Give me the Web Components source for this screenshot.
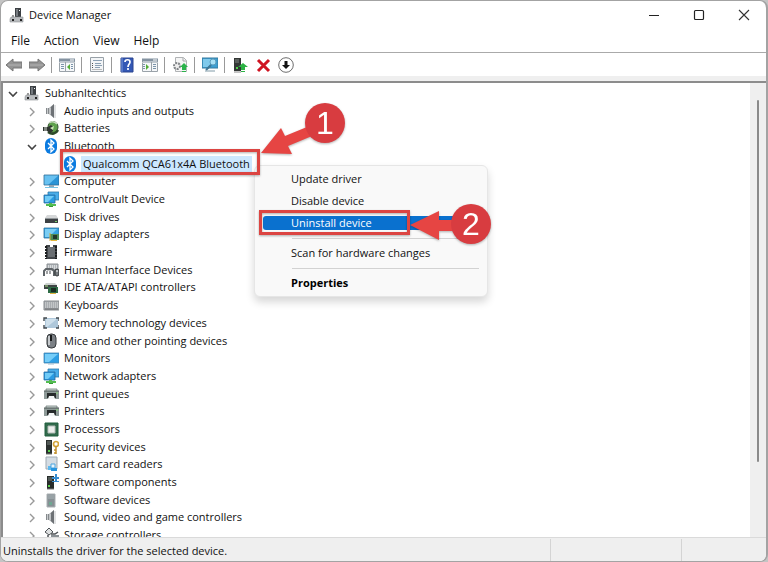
<!DOCTYPE html>
<html lang="en">
<head>
<meta charset="utf-8">
<title>Device Manager</title>
<style>
    body {
        margin: 0;
        background: #c4c4c4;
        font: 11px/16px "Open Sans", "Noto Sans", sans-serif;
        color: #111;
    }
</style>
</head>
<body>
<dm-window>
    <dm-titlebar slot="title">Device Manager</dm-titlebar>
    <dm-menubar slot="menubar"></dm-menubar>
    <dm-toolbar slot="toolbar"></dm-toolbar>
    <dm-tree>
        <dm-node level="0" icon="computer-root" open>Subhanltechtics</dm-node>
        <dm-node level="1" icon="speaker">Audio inputs and outputs</dm-node>
        <dm-node level="1" icon="battery">Batteries</dm-node>
        <dm-node level="1" icon="bluetooth" open>Bluetooth</dm-node>
        <dm-node level="2" icon="bluetooth" leaf selected>Qualcomm QCA61x4A Bluetooth</dm-node>
        <dm-node level="1" icon="computer">Computer</dm-node>
        <dm-node level="1" icon="network">ControlVault Device</dm-node>
        <dm-node level="1" icon="disk">Disk drives</dm-node>
        <dm-node level="1" icon="display">Display adapters</dm-node>
        <dm-node level="1" icon="firmware">Firmware</dm-node>
        <dm-node level="1" icon="hid">Human Interface Devices</dm-node>
        <dm-node level="1" icon="ide">IDE ATA/ATAPI controllers</dm-node>
        <dm-node level="1" icon="keyboard">Keyboards</dm-node>
        <dm-node level="1" icon="memory">Memory technology devices</dm-node>
        <dm-node level="1" icon="mouse">Mice and other pointing devices</dm-node>
        <dm-node level="1" icon="monitor">Monitors</dm-node>
        <dm-node level="1" icon="network">Network adapters</dm-node>
        <dm-node level="1" icon="printer">Print queues</dm-node>
        <dm-node level="1" icon="printer">Printers</dm-node>
        <dm-node level="1" icon="cpu">Processors</dm-node>
        <dm-node level="1" icon="security">Security devices</dm-node>
        <dm-node level="1" icon="smartcard">Smart card readers</dm-node>
        <dm-node level="1" icon="component">Software components</dm-node>
        <dm-node level="1" icon="softdev">Software devices</dm-node>
        <dm-node level="1" icon="speaker">Sound, video and game controllers</dm-node>
        <dm-node level="1" icon="storage">Storage controllers</dm-node>
    </dm-tree>
    <dm-context-menu slot="overlay">
        <dm-menu-item>Update driver</dm-menu-item>
        <dm-menu-item>Disable device</dm-menu-item>
        <dm-menu-item active>Uninstall device</dm-menu-item>
        <dm-menu-separator></dm-menu-separator>
        <dm-menu-item>Scan for hardware changes</dm-menu-item>
        <dm-menu-separator></dm-menu-separator>
        <dm-menu-item bold>Properties</dm-menu-item>
    </dm-context-menu>
    <dm-callouts slot="overlay"></dm-callouts>
    <dm-statusbar slot="status">Uninstalls the driver for the selected device.</dm-statusbar>
</dm-window>

<script>
const ICONS = {
    'computer-root': `<path d="M6 1h6v9H6z" fill="#3c4044"/><path d="M7 2h2v7H7z" fill="#74797e"/><path d="M10 3h1v1h-1z" fill="#fff"/>
        <path d="M3 8h2v2H3z" fill="#999"/><path d="M2 10h12v5H1v-3z" fill="#b8bbbe" stroke="#8d9093" stroke-width=".6"/><path d="M3 12h2v2H3zM11 12h2v2h-2z" fill="#222"/>`,
    speaker: `<path d="M3 5h4v6H3z" fill="#85898c"/><path d="M4 5h1v6H4z" fill="#c9ccce"/><path d="M6 5l5-4v14l-5-4z" fill="#a5a9ac"/><path d="M8 4l3-3v14l-3-3z" fill="#6d7175"/>
        <path d="M7 5v6" stroke="#dcdee0"/><path d="M12 2v13" stroke="#c3c6c8"/>`,
    battery: `<ellipse cx="10" cy="7" rx="5" ry="5.500" fill="#5fa24c" stroke="#35522f"/><path d="M6 3c3-2 6-1 8 1" fill="none" stroke="#c6dcbc" stroke-width="1.5"/><path d="M5 12c4 3 8 2 10-2" fill="none" stroke="#2d4a29" stroke-width="2.500"/>
        <path d="M0 7h5l3-2 2 2v4l-3 2-3-2H0z" fill="#2f3530"/><path d="M1 8h3M1 10h3" stroke="#d4dad2"/><path d="M7 8l4-2-1 4z" fill="#cde9b6"/>`,
    bluetooth: `<rect x="2" y="0" width="12" height="16" rx="6" fill="#0b7be0"/><path d="M5 5l6 6-3 3V2l3 3-6 6" fill="none" stroke="#fff" stroke-width="1.3"/>`,
    computer: `<path d="M1 2h15v10H1z" fill="#2b94d6"/><path d="M1 2h15L5 12H1z" fill="#67c1f1"/><path d="M1 2h15v10H1z" fill="none" stroke="#2e6d98" stroke-width=".8"/><path d="M6 12h5v2H6z" fill="#93a5b0"/><path d="M2 14h13v1H2z" fill="#78c4e6"/>`,
    network: `<path d="M5 1h11v8H5z" fill="#49ade9" stroke="#2f78aa" stroke-width=".8"/><path d="M1 4h11v8H1z" fill="#2a9be2" stroke="#2669a0" stroke-width=".8"/><path d="M2 5h9l-6 6H2z" fill="#70cbf7"/><path d="M6 12h3v1h4v2H3v-2h3z" fill="#53bd50"/><path d="M6 15h4v1H6z" fill="#369936"/>`,
    disk: `<path d="M4 6h9l2 3H2z" fill="#d5d7d8"/><path d="M2 9h13v5H2z" fill="#3d4144"/><path d="M2 9h13v1H2z" fill="#92979a"/><path d="M12 12h2v1h-2z" fill="#77d06d"/>`,
    display: `<path d="M1 2h15v10H1z" fill="#36a3e2" stroke="#2d7099" stroke-width=".8"/><path d="M2 3h12l-8 8H2z" fill="#7bcef4"/><path d="M7 8h9v6H7z" fill="#4e8a55"/><path d="M10 9h4v4h-4z" fill="#22372b"/><path d="M8 14h6v1H8z" fill="#e3b53b"/><path d="M7 7v8" stroke="#d7ab3f"/>`,
    firmware: `<path d="M3 1h11v14H3z" fill="#42464a"/><path d="M5 3h7v10H5z" fill="#6a6e72"/><path d="M3 2v13M13 2v13" stroke="#1b1d1e" stroke-width="2" stroke-dasharray="2 1"/><path d="M7 1h3v2H7z" fill="#fff"/>`,
    hid: `<path d="M4 2h11v6H4z" fill="#b0b5b9" stroke="#8a8f93"/><path d="M5 4h9M5 6h9" stroke="#fff" stroke-dasharray="1 1"/><path d="M1 14V9l2-2h6l2 2v5" fill="none" stroke="#5f6468" stroke-width="2"/><path d="M4 9v3M7 9v3" stroke="#44494c"/><rect x="12" y="7" width="4" height="7" rx="2" fill="#777c80" stroke="#303437"/><path d="M14 8v2" stroke="#fff"/>`,
    ide: `<path d="M3 4h9l2 2H1z" fill="#cdd2d0"/><path d="M1 6h13v4H1z" fill="#3f4545"/><path d="M5 8h10v6H5z" fill="#2e6b45"/><path d="M8 9h5v4H8z" fill="#192c21"/><path d="M7 14h6v1H7z" fill="#dfb440"/><path d="M2 7h3" stroke="#aee08c"/>`,
    keyboard: `<path d="M1 4h15v9H1z" fill="#a9adb0" stroke="#888c8f"/><path d="M2 6h13M2 8h13M2 10h13" stroke="#dcdedf" stroke-dasharray="1 1"/><path d="M2 12h13" stroke="#66696c"/>`,
    memory: `<path d="M2 3h13v10H2z" fill="#aec7da"/><path d="M3 4h11L4 12H3z" fill="#cedfeb"/><path d="M1 6V3h3M13 3h3v3M16 10v3h-3M4 13H1v-3" fill="none" stroke="#42494f" stroke-width="1.4"/>`,
    mouse: `<rect x="4" y="1" width="9" height="14" rx="4" fill="#7b8085" stroke="#34383b"/><path d="M6 3v9" stroke="#c5c9cc" stroke-width="2"/><path d="M8 2v6" stroke="#181a1b" stroke-width="2"/>`,
    monitor: `<path d="M1 3h15v10H1z" fill="#2d9fe5"/><path d="M2 4h13L6 12H2z" fill="#75cdf8"/><path d="M1 3h15v10H1z" fill="none" stroke="#4a86ad" stroke-width=".8"/><path d="M5 14h6" stroke="#a3bed0"/>`,
    printer: `<path d="M3 3h11v3H3z" fill="#d0dad7" stroke="#6f7c79" stroke-width=".8"/><path d="M1 5h15v8H1z" fill="#8d9997"/><path d="M1 5h15" stroke="#4c5755"/><path d="M4 7h9v5H4z" fill="#262b2b"/><path d="M6 10h5l1 3H5z" fill="#f3f6f6"/><path d="M13 7h2" stroke="#87da74"/>`,
    cpu: `<path d="M2 2h13v13H2z" fill="#336b4d"/><path d="M2 2h13v13H2z" fill="none" stroke="#1f5e3c"/><path d="M5 5h7v7H5z" fill="#eceeec" stroke="#b4bcb7"/>`,
    security: `<path d="M3 1h6v14H3z" fill="#2b302e"/><path d="M4 3h4M4 5h4" stroke="#79807c"/><path d="M5 11h2v2H5z" fill="#58d14b"/><path d="M3 15h6" stroke="#737875"/><circle cx="13" cy="5" r="2.500" fill="none" stroke="#d4a43a" stroke-width="1.7"/><path d="M13 7v8M13 11h-2M13 14h-2" stroke="#c1902c" stroke-width="1.5"/>`,
    smartcard: `<path d="M3 1h11v12H3z" fill="#d4dce3" stroke="#9faab3"/><path d="M5 10h4v4H5z" fill="#5bb7ed"/><path d="M8 8h4v4H8z" fill="#e9f5fd" stroke="#4da5df"/><path d="M8 12h6v3H8z" fill="#2795df"/>`,
    component: `<path d="M4 2h7v13H4z" fill="#272c2a"/><path d="M5 4h4M5 6h4" stroke="#7d8480"/><path d="M5 11h2v2H5z" fill="#5cd14d"/><path d="M4 15h7" stroke="#777"/><path d="M9 3h3V0h2v3h2v2h-2v2h2v1H9V7h3V5H9z" fill="#388dd0"/>`,
    softdev: `<path d="M4 2h8v13H4z" fill="#879094" stroke="#aab0b3"/><path d="M5 4h6M5 6h6" stroke="#a9b4b8"/><path d="M6 10h3v3H6z" fill="#6fa792"/>`,
    storage: `<path d="M2 5l4-4 4 4-4 3z" fill="#dfe1e2" stroke="#4d5255"/><path d="M5 8v3M8 7h4l3-2" fill="none" stroke="#4d5255" stroke-width="1.5"/><path d="M8 8h8v7H8z" fill="#8b9195"/>`,
    back: `<path d="M0 8l7-6v3h9v6H7v3z" fill="#949494" stroke="#777"/><path d="M2 8h13" stroke="#b3b3b3"/>`,
    forward: `<path d="M16 8L9 2v3H0v6h9v3z" fill="#949494" stroke="#777"/><path d="M1 8h13" stroke="#b3b3b3"/>`,
    'tree-pane': `<path d="M0 2h16v12H0z" fill="#f5f7f9"/><path d="M.5 2v12.500h15V2" fill="none" stroke="#9aa2a9"/><path d="M0 3h16" stroke="#8493a1" stroke-width="3"/><path d="M11 3h4" stroke="#fff"/><path d="M0 5.500h16" stroke="#c3cad0"/><path d="M2 7.500h3M2 9.500h3M2 11.500h3M12 7.500h2M12 9.500h2M12 11.500h2" stroke="#7b94aa"/><path d="M6.500 5v9" stroke="#9aa2a9"/><path d="M11 7v6L8 10z" fill="#54ad37"/>`,
    properties: `<path d="M1.500.5h13v14h-13z" fill="#f3f5f7" stroke="#98a0a7"/><path d="M4 3.500h9M6 6.500h6M6 8.500h7M6 10.500h5" stroke="#8ba0b3"/><path d="M3 6.500h1M3 8.500h1M3 10.500h1" stroke="#555"/><path d="M3 12.500h10" stroke="#bbb"/>`,
    help: `<path d="M2 1h12v14H2z" fill="#3458b5" stroke="#2a448f"/><path d="M3 1v14" stroke="#7897df"/><path d="M6 5c0-3 5-3 5 0 0 2-2 2-2 5M9 11v2" fill="none" stroke="#fff" stroke-width="1.7"/>`,
    'action-pane': `<path d="M0 2h16v12H0z" fill="#f5f7f9"/><path d="M.5 2v12.500h15V2" fill="none" stroke="#9aa2a9"/><path d="M0 3h16" stroke="#8493a1" stroke-width="3"/><path d="M11 3h4" stroke="#fff"/><path d="M0 5.500h16" stroke="#c3cad0"/><path d="M1 7.500h2M1 9.500h2M1 11.500h2M11 7.500h3M11 9.500h3M11 11.500h3" stroke="#7b94aa"/><path d="M9.500 5v9" stroke="#9aa2a9"/><path d="M4 7v6l3-3z" fill="#54ad37"/>`,
    update: `<path d="M3.500.5h8l3 3v11h-11z" fill="#f5f5f5" stroke="#b0b3b5"/><path d="M11 1v3h3" fill="none" stroke="#a5a8aa"/><circle cx="5" cy="9" r="3" fill="#eee" stroke="#808487" stroke-width="2" stroke-dasharray="2 1"/><path d="M12 6l4 4h-2v3h-4v-3H8z" fill="#2bb34b"/><path d="M10 14.500h4" stroke="#2bb34b"/>`,
    scan: `<path d="M0 1h16v10H0z" fill="#3d9ed1" stroke="#367b9f"/><path d="M1 2h12l-7 8H1z" fill="#80caec"/><circle cx="11" cy="5" r="3" fill="#a9e0f5" stroke="#5b9dbd"/><path d="M9 8l-5 5" stroke="#3e7897" stroke-width="2"/><path d="M3 14h10" stroke="#819ba8"/>`,
    enable: `<path d="M2 1h7v13H2z" fill="#333735"/><path d="M3 3h4M3 5h4" stroke="#838986"/><path d="M4 10h2v2H4z" fill="#54d14d"/><path d="M2 15h7" stroke="#888"/><path d="M11 6l5 4h-3v3H9v-3H6z" fill="#2cb244"/><path d="M9 14.500h4" stroke="#2cb244"/>`,
    remove: `<path d="M3 3l11 11M14 3L3 14" stroke="#cf1321" stroke-width="3"/>`,
    down: `<circle cx="8" cy="8" r="7.300" fill="#fff" stroke="#5c5c5c" stroke-width=".9"/><path d="M8 4v5" stroke="#111" stroke-width="3"/><path d="M4 8h8l-4 4z" fill="#111"/>`,
    minimize: `<path d="M3 8.500h10" stroke="#222"/>`,
    maximize: `<rect x="3.500" y="3.500" width="9" height="9" rx="1" fill="none" stroke="#222" stroke-width="1.2"/>`,
    close: `<path d="M3 3l10 10M13 3L3 13" stroke="#333" stroke-width="1.1"/>`,
    'chevron-right': `<path d="M6 5l4 4-4 4" fill="none" stroke="#999" stroke-width="1.4"/>`,
    'chevron-down': `<path d="M4 7l4 4 4-4" fill="none" stroke="#444" stroke-width="1.6"/>`
};

const svg = name => `<svg width="16" height="16" viewBox="0 0 16 16" aria-hidden="true">${ICONS[name] || ''}</svg>`;

class DmWindow extends HTMLElement {
    constructor() {
        super();
        this.attachShadow({ mode: 'open' });
        this.shadowRoot.innerHTML = `
        <style>
            :host {
                display: flex;
                flex-direction: column;
                position: relative;
                box-sizing: border-box;
                height: 100vh;
                border: 1px solid #a3a3a3;
                border-right-width: 2px;
                border-radius: 8px;
                background: #fff;
                overflow: hidden;
            }
            main { display: flex; flex: 1; min-height: 0; }
            ::slotted(dm-tree) { flex: 1; }
        </style>
        <slot name="title"></slot>
        <slot name="menubar"></slot>
        <slot name="toolbar"></slot>
        <main><slot></slot></main>
        <slot name="status"></slot>
        <slot name="overlay"></slot>
        `;
    }
}
customElements.define('dm-window', DmWindow);

class DmTitlebar extends HTMLElement {
    constructor() {
        super();
        this.attachShadow({ mode: 'open' });
        this.shadowRoot.innerHTML = `
        <style>
            :host { display: flex; align-items: center; height: 28px; padding-left: 8px; }
            svg { display: block; }
            h1 { flex: 1; margin: 0 0 0 4px; font-size: 11px; font-weight: 400; }
            button { width: 45px; height: 28px; padding: 0; border: 0; background: none; display: grid; place-items: center; }
        </style>
        ${svg('computer-root')}
        <h1><slot></slot></h1>
        <button aria-label="Minimize">${svg('minimize')}</button>
        <button aria-label="Maximize">${svg('maximize')}</button>
        <button aria-label="Close">${svg('close')}</button>
        `;
    }
}
customElements.define('dm-titlebar', DmTitlebar);

class DmMenubar extends HTMLElement {
    constructor() {
        super();
        this.attachShadow({ mode: 'open' });
        this.shadowRoot.innerHTML = `
        <style>
            :host { display: block; border-bottom: 1px solid #aaa; }
            nav { display: flex; gap: 14px; height: 23px; padding-left: 10px; align-items: center; }
            button { padding: 0; border: 0; background: none; font: inherit; font-size: 12px; color: inherit; }
        </style>
        <nav>
            <button>File</button>
            <button>Action</button>
            <button>View</button>
            <button>Help</button>
        </nav>
        `;
    }
}
customElements.define('dm-menubar', DmMenubar);

class DmToolbar extends HTMLElement {
    constructor() {
        super();
        this.attachShadow({ mode: 'open' });
        const groups = [
            [['back', 'Back'], ['forward', 'Forward']],
            [['tree-pane', 'Show/Hide Console Tree']],
            [['properties', 'Properties']],
            [['help', 'Help'], ['action-pane', 'Show/Hide Action Pane']],
            [['update', 'Update device driver']],
            [['scan', 'Scan for hardware changes']],
            [['enable', 'Enable device'], ['remove', 'Uninstall device'], ['down', 'Disable device']]
        ];
        this.shadowRoot.innerHTML = `
        <style>
            :host { display: flex; align-items: center; height: 23px; padding-left: 5px; border-bottom: 5px solid #efefef; }
            div { display: flex; gap: 7px; padding-right: 6px; }
            div + div { padding-left: 7px; border-left: 1px solid #999; }
            button { display: block; width: 16px; height: 16px; padding: 0; border: 0; background: none; }
            svg { display: block; }
        </style>
        ${groups.map(group => `<div>${group.map(([icon, label]) => `<button aria-label="${label}">${svg(icon)}</button>`).join('')}</div>`).join('')}
        `;
    }
}
customElements.define('dm-toolbar', DmToolbar);

class DmTree extends HTMLElement {
    constructor() {
        super();
        this.attachShadow({ mode: 'open' });
        this.shadowRoot.innerHTML = `
        <style>
            :host {
                display: flex;
                border-top: 2px solid #8c8c8c;
                border-left: 2px solid #8c8c8c;
                min-width: 0;
                overflow: hidden;
            }
            /* rows share the list height evenly */
            .list { flex: 1; display: grid; grid-auto-rows: 1fr; height: 460px; padding-top: 1px; }
            .scroll { width: 16px; background: #efefef; display: flex; justify-content: center; padding: 17px 0 75px; box-sizing: border-box; }
            .thumb { width: 2px; border-radius: 1px; background: #8a8a8a; }
        </style>
        <div class="list" role="tree"><slot></slot></div>
        <div class="scroll"><div class="thumb"></div></div>
        `;
    }
}
customElements.define('dm-tree', DmTree);

class DmNode extends HTMLElement {
    constructor() {
        super();
        this.attachShadow({ mode: 'open' });
    }
    connectedCallback() {
        const leaf = this.hasAttribute('leaf');
        const chevron = this.hasAttribute('open') ? 'chevron-down' : 'chevron-right';
        this.setAttribute('role', 'treeitem');
        this.shadowRoot.innerHTML = `
        <style>
            :host { display: flex; align-items: center; min-height: 0; padding-left: 1px; }
            :host([level="1"]) { padding-left: 20px; }
            :host([level="2"]) { padding-left: 39px; }
            button, .gap { flex: none; width: 18px; height: 16px; margin-right: 2px; padding: 0; border: 0; background: none; display: grid; place-items: center; }
            svg { display: block; flex: none; }
            .label { margin-left: 3px; padding: 0 2px; white-space: nowrap; }
            :host([selected]) .label { background: #cce8ff; }
        </style>
        ${leaf ? '<span class="gap"></span>' : `<button aria-label="Toggle">${svg(chevron)}</button>`}
        ${svg(this.getAttribute('icon'))}
        <span class="label"><slot></slot></span>
        `;
    }
}
customElements.define('dm-node', DmNode);

class DmContextMenu extends HTMLElement {
    constructor() {
        super();
        this.attachShadow({ mode: 'open' });
        this.shadowRoot.innerHTML = `
        <style>
            :host {
                position: absolute;
                left: 253px;
                top: 164px;
                width: 234px;
                box-sizing: border-box;
                padding: 2px 8px;
                border: 1px solid #e6e6e6;
                border-radius: 6px;
                background: #f9f9f9;
                box-shadow: 0 5px 8px rgba(0,0,0,0.16);
            }
        </style>
        <div role="menu"><slot></slot></div>
        `;
    }
}
customElements.define('dm-context-menu', DmContextMenu);

class DmMenuItem extends HTMLElement {
    constructor() {
        super();
        this.attachShadow({ mode: 'open' });
        this.shadowRoot.innerHTML = `
        <style>
            :host { display: block; padding: 4px 0; }
            button {
                display: block;
                width: 100%;
                height: 14px;
                padding: 0 0 0 28px;
                border: 0;
                border-radius: 3px;
                background: none;
                font: inherit;
                line-height: 14px;
                color: inherit;
                text-align: left;
            }
            :host([active]) button { background: #0a71cf; color: #fff; }
            :host([bold]) button { font-weight: 700; color: #000; }
        </style>
        <button role="menuitem"><slot></slot></button>
        `;
    }
}
customElements.define('dm-menu-item', DmMenuItem);

class DmMenuSeparator extends HTMLElement {
    constructor() {
        super();
        this.attachShadow({ mode: 'open' });
        this.shadowRoot.innerHTML = `
        <style>
            :host { display: block; margin: 4px 0 3px 29px; border-top: 1px solid #d2d2d2; }
        </style>
        `;
    }
}
customElements.define('dm-menu-separator', DmMenuSeparator);

// red boxes, arrows and step numbers drawn over the window
class DmCallouts extends HTMLElement {
    constructor() {
        super();
        this.attachShadow({ mode: 'open' });
        this.shadowRoot.innerHTML = `
        <style>
            :host { position: absolute; left: -1px; top: -1px; pointer-events: none; }
            svg { display: block; filter: drop-shadow(0 1px 1px rgba(0,0,0,0.3)); }
            text { font: 32px "Liberation Sans", Arial, sans-serif; fill: #fff; text-anchor: middle; }
        </style>
        <svg width="500" height="300" viewBox="0 0 500 300">
            <g fill="none" stroke="#dc4542" stroke-width="3">
                <path d="M61.500 150.500h197v23h-197z"/>
                <path d="M260.500 211.500h148v22h-148z"/>
            </g>
            <g fill="#e64543">
                <path d="M261 153l20-25 4 8 22-9 5 9-24 10 4 8z"/>
                <path d="M410 225l29-14v9h18v11h-18v9z"/>
            </g>
            <g fill="#d83c40">
                <circle cx="325" cy="123" r="20"/>
                <circle cx="471" cy="224" r="20"/>
            </g>
            <text x="325" y="134">1</text>
            <text x="471" y="235">2</text>
        </svg>
        `;
    }
}
customElements.define('dm-callouts', DmCallouts);

class DmStatusbar extends HTMLElement {
    constructor() {
        super();
        this.attachShadow({ mode: 'open' });
        this.shadowRoot.innerHTML = `
        <style>
            :host { display: flex; height: 22px; padding-top: 1px; border-top: 1px solid #dadada; background: #efefef; }
            span { flex: 1; padding: 4px 0 0 2px; }
            i { width: 130px; border-left: 1px solid #d4d4d4; }
            i:last-child { width: 84px; }
        </style>
        <span><slot></slot></span><i></i><i></i>
        `;
    }
}
customElements.define('dm-statusbar', DmStatusbar);
</script>
</body>
</html>
